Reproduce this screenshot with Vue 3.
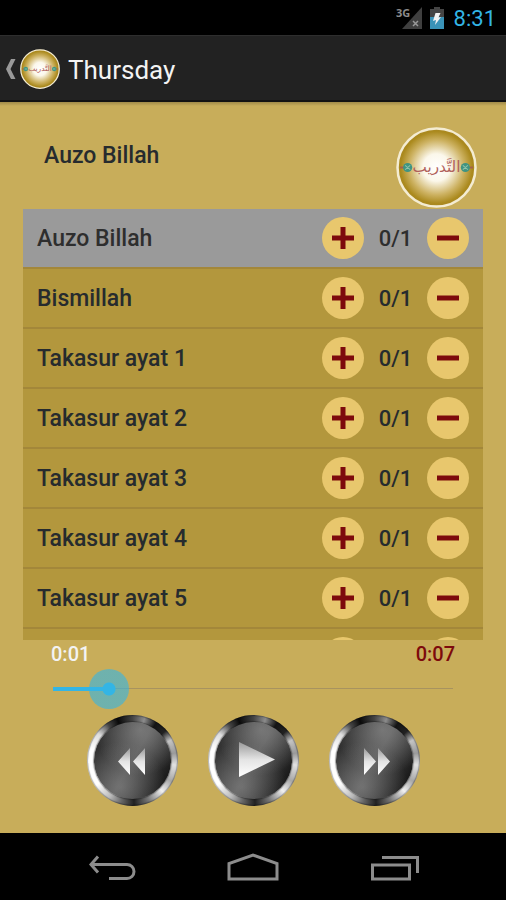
<script setup>
import { computed, ref } from 'vue';

const selected = ref(0);
const position = ref(14);
const isPlaying = ref(false);

const tracks = ref(
  [
    'Auzo Billah',
    'Bismillah',
    'Takasur ayat 1',
    'Takasur ayat 2',
    'Takasur ayat 3',
    'Takasur ayat 4',
    'Takasur ayat 5',
    'Takasur ayat 6',
  ].map((title) => ({ title, played: 0, repeat: 1 })),
);

const current = computed(() => tracks.value[selected.value]);
const seekStyle = computed(() => ({ '--seek': position.value / 100 }));

const formatTime = (seconds) => `${Math.floor(seconds / 60)}:${String(seconds % 60).padStart(2, '0')}`;

const duration = 7;
const elapsed = computed(() => formatTime(Math.round((position.value / 100) * duration)));

const changeRepeat = (track, step) => {
  track.repeat = Math.max(1, track.repeat + step);
};

const skip = (step) => {
  const next = selected.value + step;
  if (next < 0 || next >= tracks.value.length) return;
  selected.value = next;
  position.value = 0;
};
</script>

<template>
  <div class="screen">
    <svg class="sprite" aria-hidden="true">
      <defs>
        <radialGradient id="logo-fill">
          <stop offset="0" stop-color="#ffffff" />
          <stop offset="0.35" stop-color="#fbf7ea" />
          <stop offset="0.7" stop-color="#cdb262" />
          <stop offset="0.92" stop-color="#ab8a1e" />
          <stop offset="1" stop-color="#a88722" />
        </radialGradient>
        <linearGradient id="glyph-fill" x1="0" y1="0" x2="0" y2="1">
          <stop offset="0" stop-color="#9a9a9a" />
          <stop offset="0.5" stop-color="#e4e4e4" />
          <stop offset="1" stop-color="#ffffff" />
        </linearGradient>
      </defs>
      <symbol id="logo" viewBox="0 0 80 80">
        <circle cx="40" cy="40" r="38.500" fill="url(#logo-fill)" stroke="#f4ecd2" stroke-width="2.500" />
        <path d="M4 40h4M72 40h4" stroke="#a5604c" stroke-width="2" />
        <circle cx="11.500" cy="40" r="4.500" fill="#3f9482" />
        <circle cx="68.500" cy="40" r="4.500" fill="#3f9482" />
        <path d="M9 38l5 4M9 42l5-4M66 38l5 4M66 42l5-4" stroke="#8fc3a9" stroke-width="1" />
        <text x="40" y="44" text-anchor="middle" direction="rtl" font-family="DejaVu Sans, sans-serif" font-size="15" fill="#b0605a">التَّدريب</text>
      </symbol>
    </svg>

    <header class="status-bar">
      <svg class="signal" viewBox="0 0 26 24" aria-label="3G signal">
        <path d="M26 1v22H6z" fill="#3f3f3f" />
        <path d="M17 15l5 5M22 15l-5 5" stroke="#999" stroke-width="1.500" />
        <text x="0" y="11" font-family="Noto Sans, sans-serif" font-weight="700" font-size="11" fill="#8c8c8c">3G</text>
      </svg>
      <svg class="battery" viewBox="0 0 14 22" aria-label="Battery charging">
        <path d="M4 0h6v2h4v9H0V2h4z" fill="#444" />
        <path d="M0 10h14v12H0z" fill="#3a93b8" />
        <path d="M5.500 6h5L8.500 10.500 11 10 5 18l1-5-3 1z" fill="#f2f2f2" />
      </svg>
      <time class="clock">8:31</time>
    </header>

    <nav class="action-bar">
      <button class="up" type="button" aria-label="Navigate up">
        <svg class="up__chevron" viewBox="0 0 10 20">
          <path d="M5 0h4.500L4.500 10l5 10H5L0 10z" fill="#999" />
        </svg>
        <svg class="up__logo"><use href="#logo" /></svg>
      </button>
      <h1 class="action-bar__title">Thursday</h1>
    </nav>

    <main class="player">
      <section class="now-playing">
        <h2 class="now-playing__title">{{ current.title }}</h2>
        <svg class="now-playing__logo"><use href="#logo" /></svg>
      </section>

      <ul class="tracks">
        <li
          v-for="(track, index) in tracks"
          :key="track.title"
          class="track"
          :class="{ 'track--selected': index === selected }"
        >
          <button class="track__title" type="button" @click="selected = index">{{ track.title }}</button>
          <button class="round" type="button" aria-label="Increase repeats" @click="changeRepeat(track, 1)">
            <svg viewBox="0 0 22 22"><path d="M0 11h22M11 0v22" stroke="#7d0a0c" stroke-width="5" /></svg>
          </button>
          <span class="track__count">{{ track.played }}/{{ track.repeat }}</span>
          <button class="round" type="button" aria-label="Decrease repeats" @click="changeRepeat(track, -1)">
            <svg viewBox="0 0 22 22"><path d="M0 11h22" stroke="#7d0a0c" stroke-width="5" /></svg>
          </button>
        </li>
      </ul>

      <div class="times">
        <span>{{ elapsed }}</span>
        <span class="times__total">{{ formatTime(duration) }}</span>
      </div>

      <input
        v-model.number="position"
        class="seek"
        type="range"
        min="0"
        max="100"
        aria-label="Playback position"
        :style="seekStyle"
      />

      <div class="controls">
        <button class="metal" type="button" aria-label="Previous" @click="skip(-1)">
          <svg viewBox="0 0 77 77">
            <path d="M36 26v27L24 39.500zM51 26v27L39 39.500z" fill="url(#glyph-fill)" />
          </svg>
        </button>
        <button class="metal" type="button" :aria-label="isPlaying ? 'Pause' : 'Play'" @click="isPlaying = !isPlaying">
          <svg viewBox="0 0 77 77">
            <path v-if="isPlaying" d="M26 22h9v33h-9zM43 22h9v33h-9z" fill="url(#glyph-fill)" />
            <path v-else d="M24 20v35l36-17.500z" fill="url(#glyph-fill)" />
          </svg>
        </button>
        <button class="metal" type="button" aria-label="Next" @click="skip(1)">
          <svg viewBox="0 0 77 77">
            <path d="M28 26v27l12-13.500zM42 26v27l12-13.500z" fill="url(#glyph-fill)" />
          </svg>
        </button>
      </div>
    </main>

    <footer class="system-nav">
      <button type="button" aria-label="Back">
        <svg viewBox="0 0 52 28">
          <path d="M13 3.500L6 11.500l7 8M6 11.500h36a7 7 0 0 1 0 14H24" />
        </svg>
      </button>
      <button type="button" aria-label="Home">
        <svg viewBox="0 0 52 28">
          <path d="M2 26V10.500L26 2l24 8.500V26z" />
        </svg>
      </button>
      <button type="button" aria-label="Recent apps">
        <svg viewBox="0 0 52 28">
          <path d="M3.500 12h37v14h-37zM13 4.500h35.500V20" />
        </svg>
      </button>
    </footer>
  </div>
</template>

<style>
body {
  margin: 0;
  background: #000;
}
</style>

<style scoped>
.screen {
  display: flex;
  flex-direction: column;
  height: 100vh;
  background: #000;
  font-family: Roboto, sans-serif;
}

.sprite {
  position: absolute;
  width: 0;
  height: 0;
}

button {
  padding: 0;
  border: 0;
  background: none;
  font: inherit;
  color: inherit;
  cursor: pointer;
}

svg {
  display: block;
  flex-shrink: 0;
}

.status-bar {
  display: flex;
  align-items: center;
  justify-content: flex-end;
  flex-shrink: 0;
  height: 35px;
  padding-right: 10px;
}

.signal {
  width: 26px;
  height: 24px;
  margin-right: 8px;
}

.battery {
  width: 14px;
  height: 22px;
  margin-right: 10px;
}

.clock {
  padding-top: 2px;
  font-size: 22px;
  line-height: 33px;
  color: #33b5e5;
}

.action-bar {
  display: flex;
  align-items: center;
  flex-shrink: 0;
  gap: 8px;
  height: 67px;
  padding: 2px 0 0 6px;
  box-sizing: border-box;
  border-top: 1px solid #2e2e2e;
  border-bottom: 2px solid #121212;
  background: #222;
}

.up {
  display: flex;
  align-items: center;
  gap: 4px;
}

.up__chevron {
  width: 10px;
  height: 20px;
}

.up__logo {
  width: 40px;
  height: 40px;
}

.action-bar__title {
  margin: 0;
  padding-top: 1px;
  font-size: 26px;
  font-weight: 400;
  line-height: 32px;
  color: #f3f3f3;
}

.player {
  display: flex;
  flex: 1;
  flex-direction: column;
  min-height: 0;
  background: linear-gradient(#a08a48, #c8ad5a 4px);
}

.now-playing {
  display: flex;
  align-items: flex-start;
  justify-content: space-between;
  flex-shrink: 0;
  padding: 25px 29px 1px 44px;
}

.now-playing__title {
  margin: 0;
  padding-top: 15px;
  font-size: 23px;
  font-weight: 500;
  line-height: 28px;
  color: #262b2e;
}

.now-playing__logo {
  width: 81px;
  height: 81px;
}

.tracks {
  flex: 1;
  min-height: 0;
  margin: 0 23px;
  padding: 0;
  overflow-y: auto;
  list-style: none;
  scrollbar-width: none;
  background: #b3973d;
}

.track {
  display: flex;
  align-items: center;
  height: 60px;
  padding: 0 14px;
  box-sizing: border-box;
  border-bottom: 2px solid #a3873a;
  font-size: 22px;
  font-weight: 500;
  color: #262b2e;
}

.track--selected {
  background: #9a9a9a;
  color: #2e2e2e;
}

.track__title {
  flex: 1;
  padding-top: 2px;
  font-size: 23px;
  line-height: 56px;
  text-align: left;
}

.track__count {
  width: 63px;
  text-align: center;
}

.round {
  display: grid;
  place-items: center;
  width: 42px;
  height: 42px;
  border-radius: 50%;
  background: #e8c76d;
}

.round svg {
  width: 22px;
  height: 22px;
}

.times {
  display: flex;
  justify-content: space-between;
  flex-shrink: 0;
  padding: 0 51px;
  font-size: 20px;
  font-weight: 500;
  line-height: 29px;
  color: #f3f3f3;
}

.times__total {
  color: #7d0a0c;
}

.seek {
  flex-shrink: 0;
  height: 40px;
  margin: 0 33px;
  appearance: none;
  background: none;
  cursor: pointer;
}

.seek::-webkit-slider-runnable-track {
  height: 40px;
  background:
    linear-gradient(#33b5e5, #33b5e5) 20px 18px / calc((100% - 40px) * var(--seek)) 4px no-repeat,
    linear-gradient(#a8935f, #a8935f) 20px 19px / calc(100% - 40px) 1px no-repeat;
}

.seek::-webkit-slider-thumb {
  width: 40px;
  height: 40px;
  border-radius: 50%;
  appearance: none;
  background: radial-gradient(circle, #33b5e5 6px, rgba(51, 181, 229, 0.6) 7px);
}

.controls {
  display: flex;
  justify-content: center;
  flex-shrink: 0;
  gap: 30px;
  padding: 6px 0 27px;
}

.metal {
  padding: 7px;
  border-radius: 50%;
  background: conic-gradient(
    #444,
    #8c8c8c 16deg,
    #141414 32deg,
    #222 48deg,
    #c4c4c4 62deg,
    #9a9a9a 80deg,
    #e2e2e2 96deg,
    #a8a8a8 118deg,
    #f0f0f0 136deg,
    #777 158deg,
    #222 178deg,
    #666 195deg,
    #bbb 212deg,
    #fff 236deg,
    #fff 285deg,
    #ddd 308deg,
    #444 326deg,
    #0a0a0a 340deg,
    #444
  );
  box-shadow: inset 0 0 1px 1px rgba(0, 0, 0, 0.3);
}

.metal svg {
  width: 77px;
  height: 77px;
  border-radius: 50%;
  background:
    radial-gradient(circle at 35% 85%, rgba(150, 150, 150, 0.5), transparent 55%),
    radial-gradient(circle at 60% 10%, rgba(150, 150, 150, 0.6), transparent 55%),
    linear-gradient(120deg, #222, #505050 50%, #1c1c1c 85%);
  box-shadow: 0 0 1px 1px rgba(20, 20, 20, 0.4);
}

.system-nav {
  display: flex;
  justify-content: center;
  flex-shrink: 0;
  height: 67px;
}

.system-nav button {
  display: grid;
  place-items: center;
  width: 28%;
}

.system-nav svg {
  width: 52px;
  height: 28px;
  fill: none;
  stroke: #8c8c8c;
  stroke-width: 3;
}
</style>
